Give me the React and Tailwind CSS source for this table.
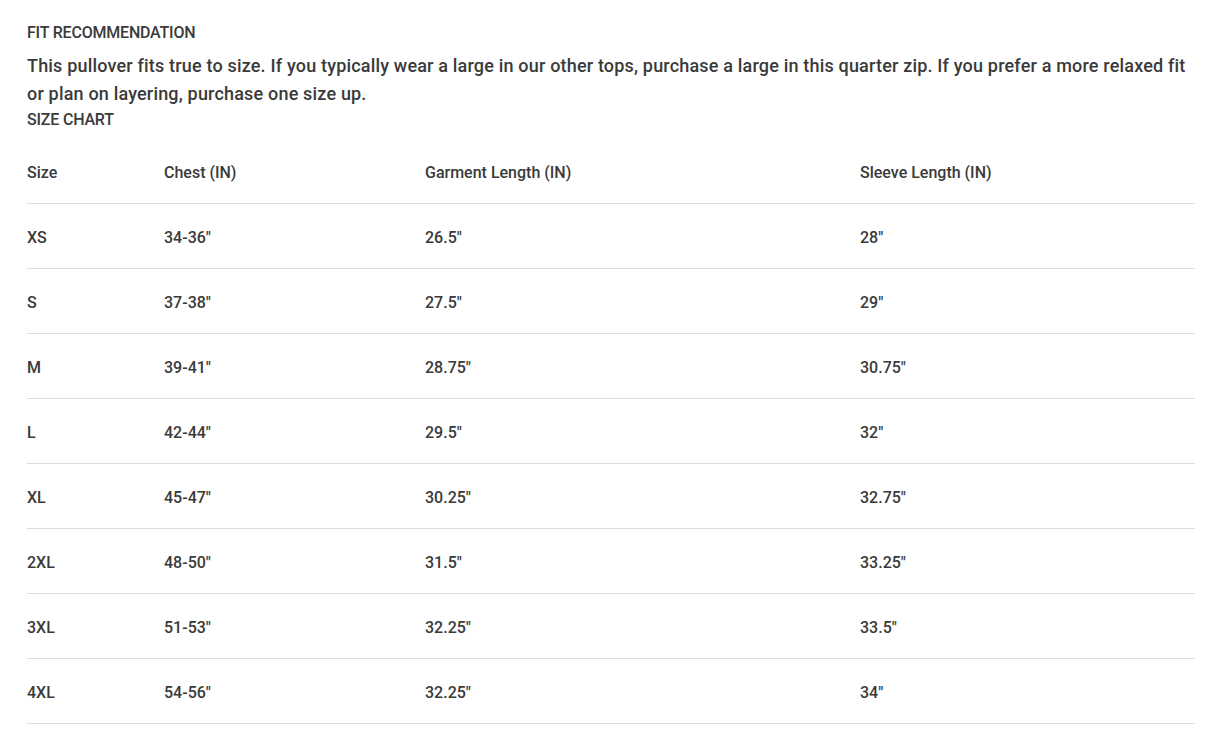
import React from "react"

const rows = [
  ["XS", "34-36\"", "26.5\"", "28\""],
  ["S", "37-38\"", "27.5\"", "29\""],
  ["M", "39-41\"", "28.75\"", "30.75\""],
  ["L", "42-44\"", "29.5\"", "32\""],
  ["XL", "45-47\"", "30.25\"", "32.75\""],
  ["2XL", "48-50\"", "31.5\"", "33.25\""],
  ["3XL", "51-53\"", "32.25\"", "33.5\""],
  ["4XL", "54-56\"", "32.25\"", "34\""],
]

const headers = ["Size", "Chest (IN)", "Garment Length (IN)", "Sleeve Length (IN)"]

const SizeGuide = () => {
  return (
    <div className="bg-white min-h-screen pl-[27px] pr-[21px] pt-[23px] text-[#3a3a3a] font-['Roboto',sans-serif]">
      {/* Fit recommendation */}
      <h3 className="text-[16px] leading-[20px] font-medium uppercase tracking-[-0.2px]">Fit Recommendation</h3>
      <p className="mt-[9px] text-[18px] leading-[28px] font-medium tracking-[0.18px]">
        This pullover fits true to size. If you typically wear a large in our other tops, purchase a large in this quarter zip. If you prefer a more relaxed fit or plan on layering, purchase one size up.
      </p>
      <h3 className="mt-[2px] text-[16px] leading-[20px] font-medium uppercase tracking-[-0.2px]">Size Chart</h3>

      {/* Size chart */}
      <table className="mt-[8px] w-full border-collapse text-[16px] font-medium">
        <thead>
          <tr className="border-b border-[#dcdcdc] h-[65px]">
            {headers.map((h, i) => (
              <th
                key={h}
                className={`text-left font-medium p-0 pt-[5px] ${
                  i === 0 ? "w-[137px]" : i === 1 ? "w-[261px]" : i === 2 ? "w-[435px]" : ""
                }`}
              >
                {h}
              </th>
            ))}
          </tr>
        </thead>
        <tbody>
          {rows.map((r) => (
            <tr key={r[0]} className="border-b border-[#dcdcdc] h-[65px]">
              {r.map((c, i) => (
                <td key={i} className="p-0 pt-[4px]">{c}</td>
              ))}
            </tr>
          ))}
        </tbody>
      </table>
    </div>
  )
}

export default function App() {
  return <SizeGuide />
}
